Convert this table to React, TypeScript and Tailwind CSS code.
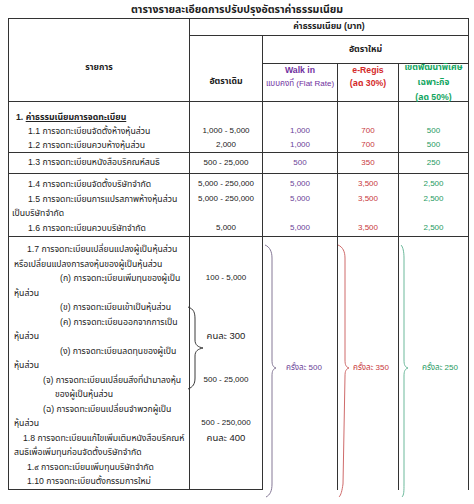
import React from 'react';

// ตารางค่าธรรมเนียม — column widths follow the scanned table
const LINE = 'h-[14.5px] leading-[14.5px] whitespace-nowrap';
const NUM = 'text-[8px]';

const rowD: { text: string; pl: string }[] = [
  { text: '1.7 การจดทะเบียนเปลี่ยนแปลงผู้เป็นหุ้นส่วน', pl: 'pl-[18px]' },
  { text: 'หรือเปลี่ยนแปลงการลงหุ้นของผู้เป็นหุ้นส่วน', pl: 'pl-[5px]' },
  { text: '(ก) การจดทะเบียนเพิ่มทุนของผู้เป็น', pl: 'pl-[51px]' },
  { text: 'หุ้นส่วน', pl: 'pl-[5px]' },
  { text: '(ข) การจดทะเบียนเข้าเป็นหุ้นส่วน', pl: 'pl-[51px]' },
  { text: '(ค) การจดทะเบียนออกจากการเป็น', pl: 'pl-[51px]' },
  { text: 'หุ้นส่วน', pl: 'pl-[5px]' },
  { text: '(ง) การจดทะเบียนลดทุนของผู้เป็น', pl: 'pl-[51px]' },
  { text: 'หุ้นส่วน', pl: 'pl-[5px]' },
  { text: '(จ) การจดทะเบียนเปลี่ยนสิ่งที่นำมาลงหุ้น', pl: 'pl-[34px]' },
  { text: 'ของผู้เป็นหุ้นส่วน', pl: 'pl-[46px]' },
  { text: '(ฉ) การจดทะเบียนเปลี่ยนจำพวกผู้เป็น', pl: 'pl-[34px]' },
  { text: 'หุ้นส่วน', pl: 'pl-[5px]' },
  { text: '1.8 การจดทะเบียนแก้ไขเพิ่มเติมหนังสือบริคณห์', pl: 'pl-[14px]' },
  { text: 'สนธิเพื่อเพิ่มทุนก่อนจัดตั้งบริษัทจำกัด', pl: 'pl-[5px]' },
  { text: '1.๙ การจดทะเบียนเพิ่มทุนบริษัทจำกัด', pl: 'pl-[18px]' },
  { text: '1.10 การจดทะเบียนตั้งกรรมการใหม่', pl: 'pl-[18px]' },
];

// col 2 of the last row: which line each value sits on
const oldRatesD: (string | null)[] = [
  null, null, '100 - 5,000', null, null, null, 'คนละ 300', null, null,
  '500 - 25,000', null, null, '500 - 250,000', 'คนละ 400',
];

function Braces() {
  return (
    <svg className="absolute left-0 top-0 pointer-events-none" width="474" height="504" viewBox="0 0 474 504" fill="none">
      <path d="M188 307 C194 309 195 313 195 319 L195 340 C195 345 198 347 203 348 C198 349 195 351 195 356 L195 378 C195 384 193 387 188 389" stroke="#3a3a3a" strokeWidth="1" />
      <path d="M265 245 C270 247 272 252 272 258 L272 360 C272 365 273 367 276 368 C273 369 272 371 272 376 L272 484 C272 491 270 495 266 497" stroke="#857896" strokeWidth="1" />
      <path d="M338 245 C343 247 345 252 345 258 L345 360 C345 365 346 367 349 368 C346 369 345 371 345 376 L343 484 C342 491 341 495 339 497" stroke="#cf6b6b" strokeWidth="1" />
      <path d="M401 245 C403 247 404 252 404 258 L404 360 C404 365 405 367 408 368 C405 369 404 371 404 376 L404 484 C404 491 404 495 402 497" stroke="#6cb99b" strokeWidth="1" />
    </svg>
  );
}

export default function App() {
  return (
    <div className="relative w-[474px] h-[504px] overflow-hidden bg-white text-[#222] text-[8.7px] font-['Liberation_Sans','Noto_Sans_Thai','Noto_Sans',sans-serif]">
      <h1 className="h-[18px] pt-[3px] text-center text-[10.5px] leading-[13px] font-bold">
        ตารางรายละเอียดการปรับปรุงอัตราค่าธรรมเนียม
      </h1>

      <div className="ml-[8px] w-[461px] grid grid-cols-[181px_73px_75px_61px_70px] grid-rows-[17px_28px_38px_51px_21px_63px_253px] border-t border-l border-[#333]">
        {/* header */}
        <div className="col-start-1 row-start-1 row-span-3 border-r border-b border-[#333] flex justify-center pt-[42px] font-bold">
          รายการ
        </div>
        <div className="col-start-2 col-span-4 row-start-1 border-r border-b border-[#333] flex items-center justify-center font-bold">
          ค่าธรรมเนียม (บาท)
        </div>
        <div className="col-start-2 row-start-2 row-span-2 border-r border-b border-[#333] flex justify-center pt-[39px] font-bold">
          อัตราเดิม
        </div>
        <div className="col-start-3 col-span-3 row-start-2 border-r border-b border-[#333] flex items-center justify-center font-bold">
          อัตราใหม่
        </div>
        <div className="col-start-3 row-start-3 border-r border-b border-[#333] flex flex-col items-center leading-[13px] text-[#7030a0]">
          <span className="font-bold">Walk in</span>
          <span className="text-[8px]">แบบคงที่ (Flat Rate)</span>
        </div>
        <div className="col-start-4 row-start-3 border-r border-b border-[#333] flex flex-col items-center leading-[13px] text-[#d42a2a] font-bold">
          <span>e-Regis</span>
          <span>(ลด 30%)</span>
        </div>
        <div className="col-start-5 row-start-3 border-r border-b border-[#333] flex flex-col items-center leading-[15px] text-[#13a65f] font-bold">
          <span className="-mt-[4px]">เขตพัฒนาพิเศษ</span>
          <span>เฉพาะกิจ</span>
          <span>(ลด 50%)</span>
        </div>

        {/* row A: 1.1 - 1.2 */}
        <div className="col-start-1 row-start-4 border-r border-b border-[#333] pt-[8px] leading-[14px]">
          <div className="pl-[7px] font-bold">
            1. <span className="underline">ค่าธรรมเนียมการจดทะเบียน</span>
          </div>
          <div className="pl-[19px]">1.1 การจดทะเบียนจัดตั้งห้างหุ้นส่วน</div>
          <div className="pl-[19px]">1.2 การจดทะเบียนควบห้างหุ้นส่วน</div>
        </div>
        <div className={`col-start-2 row-start-4 border-r border-b border-[#333] pt-[22px] leading-[14px] text-center ${NUM}`}>
          <div>1,000 - 5,000</div>
          <div>2,000</div>
        </div>
        <div className={`col-start-3 row-start-4 border-r border-b border-[#333] pt-[22px] leading-[14px] text-center text-[#6b3f98] ${NUM}`}>
          <div>1,000</div>
          <div>1,000</div>
        </div>
        <div className={`col-start-4 row-start-4 border-r border-b border-[#333] pt-[22px] leading-[14px] text-center text-[#c8383c] ${NUM}`}>
          <div>700</div>
          <div>700</div>
        </div>
        <div className={`col-start-5 row-start-4 border-r border-b border-[#333] pt-[22px] leading-[14px] text-center text-[#1f9a62] ${NUM}`}>
          <div>500</div>
          <div>500</div>
        </div>

        {/* row B: 1.3 */}
        <div className="col-start-1 row-start-5 border-r border-b border-[#333] flex items-center pl-[19px]">
          1.3 การจดทะเบียนหนังสือบริคณห์สนธิ
        </div>
        <div className={`col-start-2 row-start-5 border-r border-b border-[#333] flex items-center justify-center ${NUM}`}>500 - 25,000</div>
        <div className={`col-start-3 row-start-5 border-r border-b border-[#333] flex items-center justify-center text-[#6b3f98] ${NUM}`}>500</div>
        <div className={`col-start-4 row-start-5 border-r border-b border-[#333] flex items-center justify-center text-[#c8383c] ${NUM}`}>350</div>
        <div className={`col-start-5 row-start-5 border-r border-b border-[#333] flex items-center justify-center text-[#1f9a62] ${NUM}`}>250</div>

        {/* row C: 1.4 - 1.6 */}
        <div className="col-start-1 row-start-6 border-r border-b border-[#333] pt-[3px]">
          <div className={`${LINE} pl-[19px]`}>1.4 การจดทะเบียนจัดตั้งบริษัทจำกัด</div>
          <div className={`${LINE} pl-[19px]`}>1.5 การจดทะเบียนการแปรสภาพห้างหุ้นส่วน</div>
          <div className={`${LINE} pl-[3px]`}>เป็นบริษัทจำกัด</div>
          <div className={`${LINE} pl-[19px]`}>1.6 การจดทะเบียนควบบริษัทจำกัด</div>
        </div>
        <div className={`col-start-2 row-start-6 border-r border-b border-[#333] pt-[3px] text-center ${NUM}`}>
          <div className={LINE}>5,000 - 250,000</div>
          <div className={LINE}>5,000 - 250,000</div>
          <div className={LINE}></div>
          <div className={LINE}>5,000</div>
        </div>
        <div className={`col-start-3 row-start-6 border-r border-b border-[#333] pt-[3px] text-center text-[#6b3f98] ${NUM}`}>
          <div className={LINE}>5,000</div>
          <div className={LINE}>5,000</div>
          <div className={LINE}></div>
          <div className={LINE}>5,000</div>
        </div>
        <div className={`col-start-4 row-start-6 border-r border-b border-[#333] pt-[3px] text-center text-[#c8383c] ${NUM}`}>
          <div className={LINE}>3,500</div>
          <div className={LINE}>3,500</div>
          <div className={LINE}></div>
          <div className={LINE}>3,500</div>
        </div>
        <div className={`col-start-5 row-start-6 border-r border-b border-[#333] pt-[3px] text-center text-[#1f9a62] ${NUM}`}>
          <div className={LINE}>2,500</div>
          <div className={LINE}>2,500</div>
          <div className={LINE}></div>
          <div className={LINE}>2,500</div>
        </div>

        {/* row D: 1.7 - 1.10 */}
        <div className="col-start-1 row-start-7 border-r border-b border-[#333] pt-[5px]">
          {rowD.map((l, i) => (
            <div key={i} className={`${LINE} ${l.pl}`}>{l.text}</div>
          ))}
        </div>
        <div className={`col-start-2 row-start-7 border-r border-b border-[#333] pt-[5px] text-center ${NUM}`}>
          {oldRatesD.map((t, i) => (
            <div key={i} className={`${LINE} ${t && t.startsWith('คน') ? 'text-[9.5px]' : ''}`}>{t}</div>
          ))}
        </div>
        <div className={`col-start-3 row-start-7 border-r border-[#333] pt-[124px] pl-[23px] text-[#6b3f98] ${NUM}`}>
          <div className={LINE}>ครั้งละ 500</div>
        </div>
        <div className={`col-start-4 row-start-7 border-r border-[#333] pt-[124px] pl-[15px] text-[#c8383c] ${NUM}`}>
          <div className={LINE}>ครั้งละ 350</div>
        </div>
        <div className={`col-start-5 row-start-7 border-r border-[#333] pt-[124px] pl-[23px] text-[#1f9a62] ${NUM}`}>
          <div className={LINE}>ครั้งละ 250</div>
        </div>
      </div>

      <Braces />
    </div>
  );
}
